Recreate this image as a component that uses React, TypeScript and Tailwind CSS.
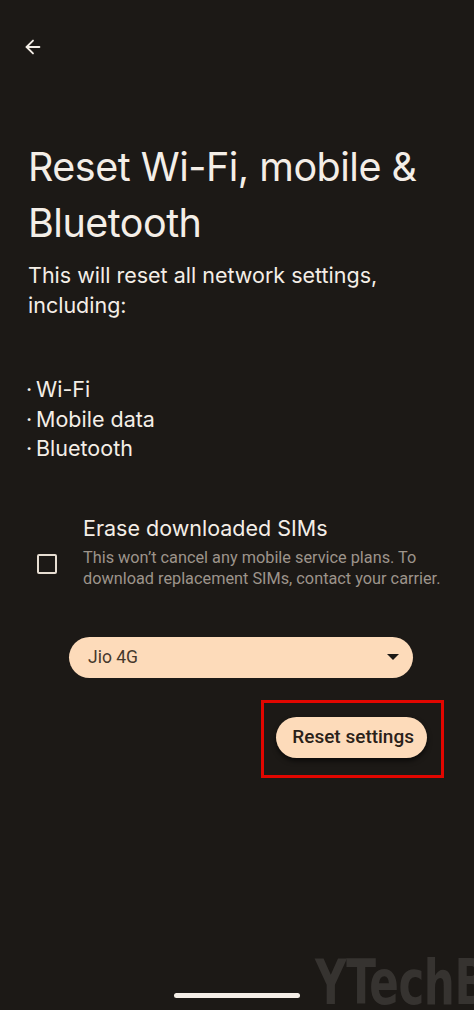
import { ArrowLeft } from "lucide-react";

export default function App() {
  return (
    <div
      className="relative flex h-[1010px] w-[474px] flex-col overflow-hidden bg-[#1c1916] text-[#f4eee7]"
      style={{ fontFamily: "Inter, 'Open Sans', sans-serif" }}
    >
      <div className="pl-[22px] pt-[36px]">
        <ArrowLeft size={22} strokeWidth={2} className="text-[#f4eee7]" />
      </div>

      <h1 className="mt-[81px] pl-[28px] pr-[20px] text-[39.5px] font-normal leading-[56px] tracking-[-0.5px]">
        Reset Wi-Fi, mobile &amp; Bluetooth
      </h1>

      <p className="mt-[9px] pl-[28px] pr-[40px] text-[21.5px] leading-[30px]">
        This will reset all network settings, including:
      </p>

      <ul className="mt-[55px] pl-[26px] text-[21.5px] leading-[29.5px]">
        <li>
          <span className="inline-block w-[10px]">·</span>Wi-Fi
        </li>
        <li>
          <span className="inline-block w-[10px]">·</span>Mobile data
        </li>
        <li>
          <span className="inline-block w-[10px]">·</span>Bluetooth
        </li>
      </ul>

      <div className="mt-[49px] flex items-start">
        <div className="flex w-[83px] justify-center pl-[10px] pt-[41px]">
          <div className="h-[20px] w-[20px] rounded-[2px] border-2 border-[#e6ddd2]" />
        </div>
        <div className="flex-1 pr-[12px]">
          <div className="text-[21.5px] leading-[30px]">Erase downloaded SIMs</div>
          <div
            className="mt-[4px] text-[16.3px] leading-[21px] text-[#9d948b]"
            style={{ fontFamily: "Roboto, sans-serif" }}
          >
            This won’t cancel any mobile service plans. To download replacement SIMs, contact your carrier.
          </div>
        </div>
      </div>

      <div className="mt-[48px] pl-[69px] pr-[61px]">
        <div
          className="flex h-[41px] items-center justify-between rounded-full bg-[#fddbba] pl-[19px] pr-[14px] text-[17.5px] text-[#45382c]"
          style={{ fontFamily: "Roboto, sans-serif" }}
        >
          <span>Jio 4G</span>
          <svg width="12" height="6" viewBox="0 0 12 6">
            <path d="M0 0h12L6 6z" fill="#1c1916" />
          </svg>
        </div>
      </div>

      <div className="mt-[22px] flex justify-end pr-[30px]">
        <div className="border-[3px] border-[#e10600] pb-[17px] pl-[12px] pr-[14px] pt-[14px]">
          <button
            type="button"
            className="h-[41px] rounded-full bg-[#fddbba] pl-[16px] pr-[13px] text-[19px] font-medium text-[#2a2119] shadow-[0_3px_5px_rgba(0,0,0,0.6)]"
            style={{ fontFamily: "Roboto, sans-serif" }}
          >
            Reset settings
          </button>
        </div>
      </div>

      <div className="mt-auto flex justify-center pb-[12px]">
        <div className="h-[5px] w-[126px] rounded-full bg-[#f4eee7]" />
      </div>

      <div
        className="pointer-events-none absolute bottom-[-4px] left-[315px] origin-left scale-x-[0.77] text-[63px] font-bold leading-none tracking-[-0.5px] text-[#363330]"
        style={{ fontFamily: "'DejaVu Sans Condensed', 'DejaVu Sans', sans-serif" }}
      >
        YTechB
      </div>
    </div>
  );
}
